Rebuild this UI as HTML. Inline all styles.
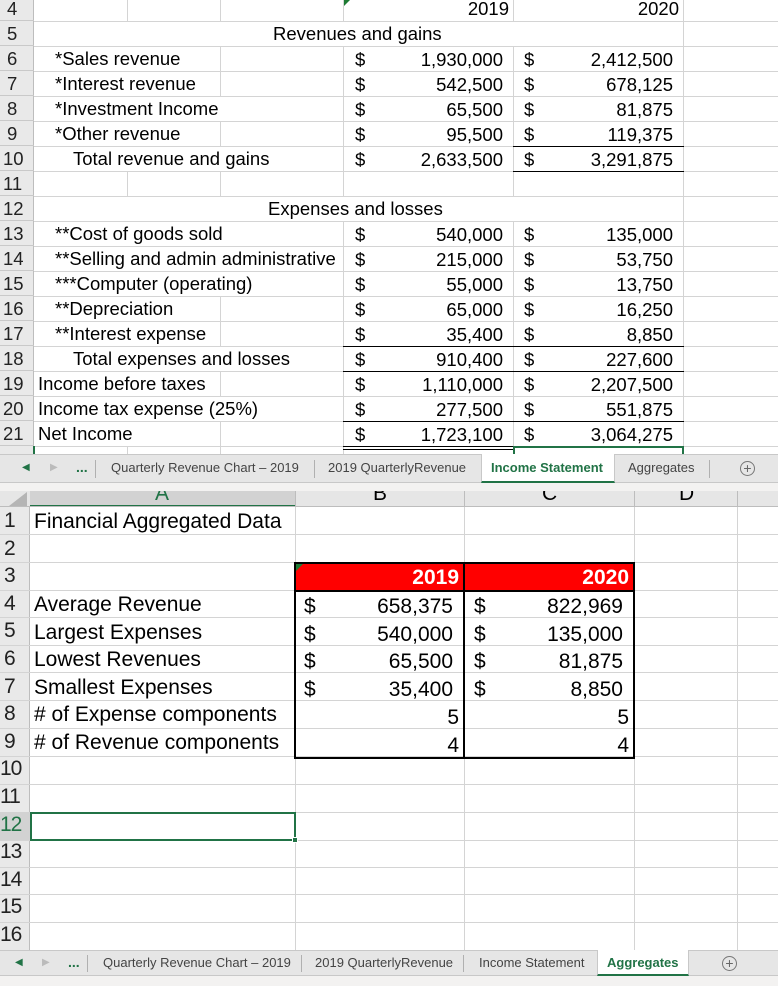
<!DOCTYPE html>
<html><head><meta charset="utf-8">
<style>
*{margin:0;padding:0;box-sizing:border-box}
body{width:778px;height:986px;overflow:hidden;background:#fff;font-family:"Liberation Sans",Arial,sans-serif;color:#000;position:relative}
.a{position:absolute;white-space:nowrap}
.t{font-size:18.5px;line-height:24px;height:24px}
.l{font-size:21px;line-height:27px;height:27px}
.hl{position:absolute;height:1px;background:#d4d4d4}
.vl{position:absolute;width:1px;background:#d4d4d4}
.bk{position:absolute;background:#000}
.r{text-align:right}
.w{background:#fff}
.tab{position:absolute;font-size:13px;color:#444;white-space:nowrap}
.sep{position:absolute;width:1px;background:#b0b0b0}
</style></head><body>

<div class="hl" style="left:34px;width:744px;top:21px"></div>
<div class="hl" style="left:34px;width:744px;top:46px"></div>
<div class="hl" style="left:34px;width:744px;top:71px"></div>
<div class="hl" style="left:34px;width:744px;top:96px"></div>
<div class="hl" style="left:34px;width:744px;top:121px"></div>
<div class="hl" style="left:34px;width:744px;top:146px"></div>
<div class="hl" style="left:34px;width:744px;top:171px"></div>
<div class="hl" style="left:34px;width:744px;top:196px"></div>
<div class="hl" style="left:34px;width:744px;top:221px"></div>
<div class="hl" style="left:34px;width:744px;top:246px"></div>
<div class="hl" style="left:34px;width:744px;top:271px"></div>
<div class="hl" style="left:34px;width:744px;top:296px"></div>
<div class="hl" style="left:34px;width:744px;top:321px"></div>
<div class="hl" style="left:34px;width:744px;top:346px"></div>
<div class="hl" style="left:34px;width:744px;top:371px"></div>
<div class="hl" style="left:34px;width:744px;top:396px"></div>
<div class="hl" style="left:34px;width:744px;top:421px"></div>
<div class="hl" style="left:34px;width:744px;top:446px"></div>
<div class="vl" style="left:127px;top:0;height:454px"></div>
<div class="vl" style="left:220px;top:0;height:454px"></div>
<div class="vl" style="left:343px;top:0;height:454px"></div>
<div class="vl" style="left:513px;top:0;height:454px"></div>
<div class="vl" style="left:683px;top:0;height:454px"></div>
<div class="a w" style="left:35px;top:22px;width:647px;height:24px"></div>
<div class="a w" style="left:35px;top:197px;width:647px;height:24px"></div>

<div style="position:absolute;left:0;top:0;width:34px;height:454px;background:#e9e9e9;border-right:1px solid #bdbdbd"></div>
<div class="a" style="left:0;top:-4px;width:34px;font-size:18.5px;color:#222;line-height:25px">
<div style="height:25px;border-bottom:1px solid #c9c9c9;padding-left:7px">4</div>
<div style="height:25px;border-bottom:1px solid #c9c9c9;padding-left:7px">5</div>
<div style="height:25px;border-bottom:1px solid #c9c9c9;padding-left:7px">6</div>
<div style="height:25px;border-bottom:1px solid #c9c9c9;padding-left:7px">7</div>
<div style="height:25px;border-bottom:1px solid #c9c9c9;padding-left:7px">8</div>
<div style="height:25px;border-bottom:1px solid #c9c9c9;padding-left:7px">9</div>
<div style="height:25px;border-bottom:1px solid #c9c9c9;padding-left:3px">10</div>
<div style="height:25px;border-bottom:1px solid #c9c9c9;padding-left:3px">11</div>
<div style="height:25px;border-bottom:1px solid #c9c9c9;padding-left:3px">12</div>
<div style="height:25px;border-bottom:1px solid #c9c9c9;padding-left:3px">13</div>
<div style="height:25px;border-bottom:1px solid #c9c9c9;padding-left:3px">14</div>
<div style="height:25px;border-bottom:1px solid #c9c9c9;padding-left:3px">15</div>
<div style="height:25px;border-bottom:1px solid #c9c9c9;padding-left:3px">16</div>
<div style="height:25px;border-bottom:1px solid #c9c9c9;padding-left:3px">17</div>
<div style="height:25px;border-bottom:1px solid #c9c9c9;padding-left:3px">18</div>
<div style="height:25px;border-bottom:1px solid #c9c9c9;padding-left:3px">19</div>
<div style="height:25px;border-bottom:1px solid #c9c9c9;padding-left:3px">20</div>
<div style="height:25px;border-bottom:1px solid #c9c9c9;padding-left:3px">21</div>
</div>

<div style="position:absolute;left:344px;top:0;width:0;height:0;border-top:6px solid #1e7b34;border-right:6px solid transparent"></div>
<div class="a t r" style="left:420px;width:89px;top:-3px">2019</div>
<div class="a t r" style="left:590px;width:89px;top:-3px">2020</div>
<div class="a t" style="left:273px;top:22px">Revenues and gains</div>
<div class="a t w" style="left:55px;top:47px;width:164px">*Sales revenue</div>
<div class="a t w" style="left:55px;top:72px;width:164px">*Interest revenue</div>
<div class="a t w" style="left:55px;top:97px;width:287px">*Investment Income</div>
<div class="a t w" style="left:55px;top:122px;width:164px">*Other revenue</div>
<div class="a t w" style="left:73px;top:147px;width:269px">Total revenue and gains</div>
<div class="a t" style="left:268px;top:197px">Expenses and losses</div>
<div class="a t w" style="left:55px;top:222px;width:287px">**Cost of goods sold</div>
<div class="a t w" style="left:55px;top:247px;width:287px">**Selling and admin administrative</div>
<div class="a t w" style="left:55px;top:272px;width:287px">***Computer (operating)</div>
<div class="a t w" style="left:55px;top:297px;width:164px">**Depreciation</div>
<div class="a t w" style="left:55px;top:322px;width:164px">**Interest expense</div>
<div class="a t w" style="left:73px;top:347px;width:269px">Total expenses and losses</div>
<div class="a t w" style="left:38px;top:372px;width:181px">Income before taxes</div>
<div class="a t w" style="left:38px;top:397px;width:304px">Income tax expense (25%)</div>
<div class="a t w" style="left:38px;top:422px;width:181px">Net Income</div>

<div class="a t" style="left:355px;top:47px;line-height:25px">$<br>$<br>$<br>$<br>$</div>
<div class="a t r" style="left:390px;width:113px;top:47px;line-height:25px">1,930,000<br>542,500<br>65,500<br>95,500<br>2,633,500</div>
<div class="a t" style="left:524px;top:47px;line-height:25px">$<br>$<br>$<br>$<br>$</div>
<div class="a t r" style="left:560px;width:113px;top:47px;line-height:25px">2,412,500<br>678,125<br>81,875<br>119,375<br>3,291,875</div>

<div class="a t" style="left:355px;top:222px;line-height:25px">$<br>$<br>$<br>$<br>$<br>$<br>$<br>$<br>$</div>
<div class="a t r" style="left:390px;width:113px;top:222px;line-height:25px">540,000<br>215,000<br>55,000<br>65,000<br>35,400<br>910,400<br>1,110,000<br>277,500<br>1,723,100</div>
<div class="a t" style="left:524px;top:222px;line-height:25px">$<br>$<br>$<br>$<br>$<br>$<br>$<br>$<br>$</div>
<div class="a t r" style="left:560px;width:113px;top:222px;line-height:25px">135,000<br>53,750<br>13,750<br>16,250<br>8,850<br>227,600<br>2,207,500<br>551,875<br>3,064,275</div>

<div class="bk" style="left:513px;width:171px;top:146px;height:1px"></div>
<div class="bk" style="left:513px;width:171px;top:171px;height:1px"></div>
<div class="bk" style="left:343px;width:341px;top:346px;height:1px"></div>
<div class="bk" style="left:343px;width:341px;top:371px;height:1px"></div>
<div class="bk" style="left:343px;width:341px;top:421px;height:1px"></div>
<div class="bk" style="left:343px;width:170px;top:446px;height:1px"></div>
<div class="bk" style="left:343px;width:170px;top:449px;height:1px"></div>
<div style="position:absolute;left:513px;top:446px;width:171px;height:10px;border:2px solid #217346;border-bottom:none"></div>
<div style="position:absolute;left:33px;top:446px;width:2px;height:8px;background:#217346"></div>

<div style="position:absolute;left:0;top:454px;width:778px;height:29px;background:#e6e6e6;border-top:1px solid #c8c8c8;border-bottom:1px solid #c8c8c8"></div>
<div style="position:absolute;left:0;top:483px;width:778px;height:8px;background:#f3f2f1"></div>
<div class="a" style="left:22px;top:462px;font-size:10px;color:#217346">&#9664;</div>
<div class="a" style="left:50px;top:462px;font-size:10px;color:#bbb">&#9654;</div>
<div class="a" style="left:76px;top:459px;font-size:14px;color:#217346;font-weight:bold">...</div>
<div class="sep" style="left:95px;top:460px;height:18px"></div>
<div class="tab" style="left:111px;top:460px">Quarterly Revenue Chart – 2019</div>
<div class="sep" style="left:314px;top:460px;height:18px"></div>
<div class="tab" style="left:328px;top:460px">2019 QuarterlyRevenue</div>
<div style="position:absolute;left:481px;top:454px;width:134px;height:29px;background:#fff;border-left:1px solid #c8c8c8;border-right:1px solid #c8c8c8;border-bottom:2px solid #217346"></div>
<div class="tab" style="left:491px;top:460px;color:#217346;font-weight:bold">Income Statement</div>
<div class="tab" style="left:628px;top:460px">Aggregates</div>
<div class="sep" style="left:709px;top:460px;height:18px"></div>
<div style="position:absolute;left:740px;top:461px;width:15px;height:15px;border:1px solid #777;border-radius:50%;font-size:14px;line-height:12px;text-align:center;color:#666">+</div>

<div style="position:absolute;left:0;top:491px;width:778px;height:16px;background:#e6e6e6;border-bottom:1px solid #bdbdbd;overflow:hidden">
  <div style="position:absolute;left:30px;top:0;width:265px;height:16px;background:#d2d2d2;border-bottom:2px solid #217346"></div>
  <div style="position:absolute;left:464px;top:0;width:1px;height:16px;background:#bdbdbd"></div>
  <div style="position:absolute;left:295px;top:0;width:1px;height:16px;background:#bdbdbd"></div>
  <div style="position:absolute;left:634px;top:0;width:1px;height:16px;background:#bdbdbd"></div>
  <div style="position:absolute;left:737px;top:0;width:1px;height:16px;background:#bdbdbd"></div>
  <div class="a" style="left:155px;top:-9px;font-size:21px;color:#217346">A</div>
  <div class="a" style="left:373px;top:-9px;font-size:21px">B</div>
  <div class="a" style="left:542px;top:-9px;font-size:21px">C</div>
  <div class="a" style="left:679px;top:-9px;font-size:21px">D</div>
</div>
<div style="position:absolute;left:9px;top:492px;width:0;height:0;border-bottom:14px solid #b5b5b5;border-left:18px solid transparent"></div>

<div style="position:absolute;left:0;top:507px;width:30px;height:443px;background:#e9e9e9;border-right:1px solid #bdbdbd"></div>
<div class="vl" style="left:295px;top:507px;height:443px"></div>
<div class="vl" style="left:464px;top:507px;height:443px"></div>
<div class="vl" style="left:634px;top:507px;height:443px"></div>
<div class="vl" style="left:737px;top:507px;height:443px"></div>
<div class="hl" style="left:0;width:778px;top:534px"></div>
<div class="hl" style="left:0;width:778px;top:562px"></div>
<div class="hl" style="left:0;width:778px;top:590px"></div>
<div class="hl" style="left:0;width:778px;top:617px"></div>
<div class="hl" style="left:0;width:778px;top:645px"></div>
<div class="hl" style="left:0;width:778px;top:672px"></div>
<div class="hl" style="left:0;width:778px;top:700px"></div>
<div class="hl" style="left:0;width:778px;top:728px"></div>
<div class="hl" style="left:0;width:778px;top:756px"></div>
<div class="hl" style="left:0;width:778px;top:784px"></div>
<div class="hl" style="left:0;width:778px;top:812px"></div>
<div class="hl" style="left:0;width:778px;top:840px"></div>
<div class="hl" style="left:0;width:778px;top:867px"></div>
<div class="hl" style="left:0;width:778px;top:894px"></div>
<div class="hl" style="left:0;width:778px;top:922px"></div>
<div style="position:absolute;left:0;top:812px;width:30px;height:28px;background:#d2d2d2"></div>
<div class="a" style="left:0;top:507px;width:30px;font-size:21px;line-height:27.6px;color:#222">
<div style="height:27.6px;padding-left:4px">1</div>
<div style="height:27.6px;padding-left:4px">2</div>
<div style="height:27.6px;padding-left:4px">3</div>
<div style="height:27.6px;padding-left:4px">4</div>
<div style="height:27.6px;padding-left:4px">5</div>
<div style="height:27.6px;padding-left:4px">6</div>
<div style="height:27.6px;padding-left:4px">7</div>
<div style="height:27.6px;padding-left:4px">8</div>
<div style="height:27.6px;padding-left:4px">9</div>
<div style="height:27.6px;letter-spacing:-1px">10</div>
<div style="height:27.6px;letter-spacing:-1px">11</div>
<div style="height:27.6px;letter-spacing:-1px;color:#217346">12</div>
<div style="height:27.6px;letter-spacing:-1px">13</div>
<div style="height:27.6px;letter-spacing:-1px">14</div>
<div style="height:27.6px;letter-spacing:-1px">15</div>
<div style="height:27.6px;letter-spacing:-1px">16</div>
</div>

<div class="a l" style="left:34px;top:508px;line-height:27.6px">Financial Aggregated Data</div>
<div class="a" style="left:34px;top:591px;font-size:21px;line-height:27.6px">Average Revenue<br>Largest Expenses<br>Lowest Revenues<br>Smallest Expenses<br># of Expense components<br># of Revenue components</div>

<div style="position:absolute;left:295px;top:563px;width:338px;height:29px;background:#ff0000"></div>
<div style="position:absolute;left:296px;top:564px;width:0;height:0;border-top:7px solid #1e7b34;border-right:7px solid transparent"></div>
<div class="a r" style="left:370px;width:89px;top:563px;font-size:21px;line-height:29px;color:#fff;font-weight:bold">2019</div>
<div class="a r" style="left:540px;width:89px;top:563px;font-size:21px;line-height:29px;color:#fff;font-weight:bold">2020</div>
<div style="position:absolute;left:294px;top:562px;width:341px;height:197px;border:2px solid #000"></div>
<div class="bk" style="left:463px;top:562px;width:2px;height:197px"></div>
<div class="bk" style="left:294px;top:590px;width:341px;height:2px"></div>
<div class="a" style="left:304px;top:593px;font-size:21px;line-height:27.6px">$<br>$<br>$<br>$</div>
<div class="a r" style="left:350px;width:103px;top:593px;font-size:21px;line-height:27.6px">658,375<br>540,000<br>65,500<br>35,400</div>
<div class="a r" style="left:360px;width:99px;top:704px;font-size:21px;line-height:27.6px">5<br>4</div>
<div class="a" style="left:474px;top:593px;font-size:21px;line-height:27.6px">$<br>$<br>$<br>$</div>
<div class="a r" style="left:520px;width:103px;top:593px;font-size:21px;line-height:27.6px">822,969<br>135,000<br>81,875<br>8,850</div>
<div class="a r" style="left:530px;width:99px;top:704px;font-size:21px;line-height:27.6px">5<br>4</div>

<div style="position:absolute;left:30px;top:812px;width:266px;height:29px;border:2px solid #217346"></div>
<div style="position:absolute;left:292px;top:837px;width:6px;height:6px;background:#217346;border:1px solid #fff"></div>

<div style="position:absolute;left:0;top:950px;width:778px;height:26px;background:#e6e6e6;border-top:1px solid #c8c8c8;border-bottom:1px solid #c8c8c8"></div>
<div style="position:absolute;left:0;top:976px;width:778px;height:10px;background:#f3f2f1"></div>
<div class="a" style="left:15px;top:957px;font-size:10px;color:#217346">&#9664;</div>
<div class="a" style="left:42px;top:957px;font-size:10px;color:#bbb">&#9654;</div>
<div class="a" style="left:68px;top:954px;font-size:14px;color:#217346;font-weight:bold">...</div>
<div class="sep" style="left:87px;top:955px;height:17px"></div>
<div class="tab" style="left:103px;top:955px">Quarterly Revenue Chart – 2019</div>
<div class="sep" style="left:301px;top:955px;height:17px"></div>
<div class="tab" style="left:315px;top:955px">2019 QuarterlyRevenue</div>
<div class="sep" style="left:463px;top:955px;height:17px"></div>
<div class="tab" style="left:479px;top:955px">Income Statement</div>
<div style="position:absolute;left:597px;top:950px;width:92px;height:26px;background:#fff;border-left:1px solid #c8c8c8;border-right:1px solid #c8c8c8;border-bottom:2px solid #217346"></div>
<div class="tab" style="left:607px;top:955px;color:#217346;font-weight:bold">Aggregates</div>
<div style="position:absolute;left:722px;top:956px;width:15px;height:15px;border:1px solid #777;border-radius:50%;font-size:14px;line-height:12px;text-align:center;color:#666">+</div>

</body></html>
